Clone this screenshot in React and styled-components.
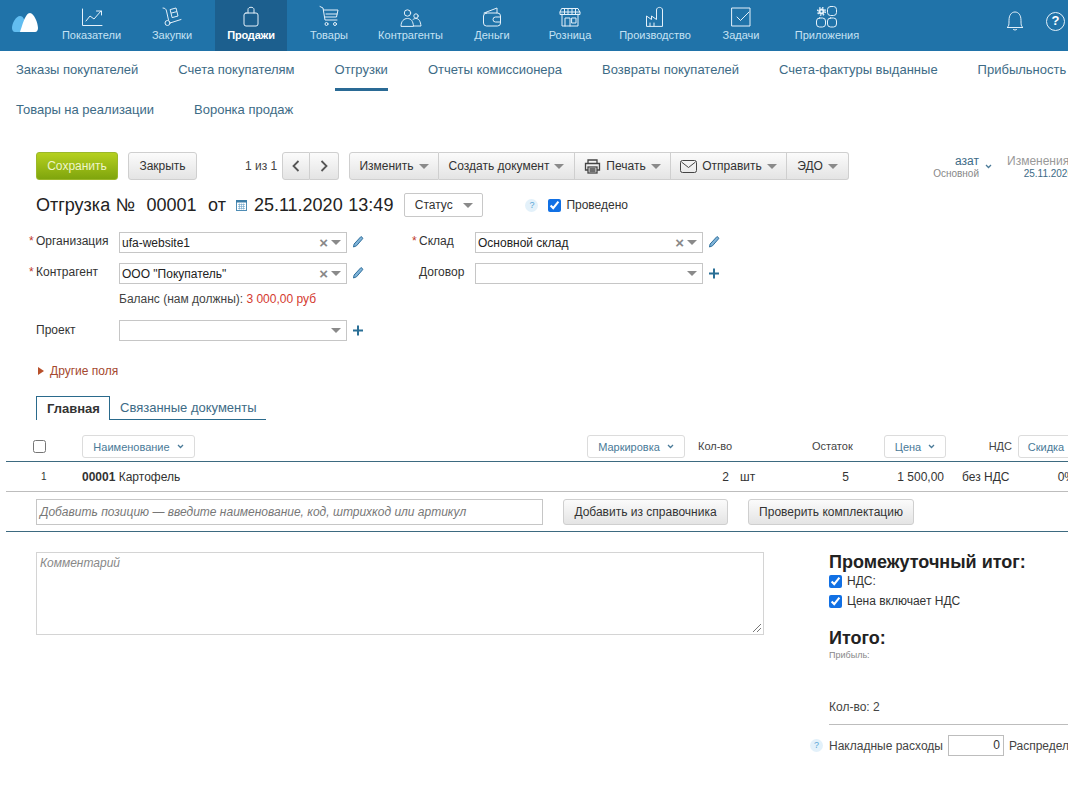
import React from 'react';
import styled, { createGlobalStyle } from 'styled-components';

const Global = createGlobalStyle`
  html, body { margin: 0; padding: 0; background: #fff; overflow: hidden; }
  body { font-family: "Liberation Sans", Arial, sans-serif; font-size: 12px; color: #333; }
  * { box-sizing: border-box; }
`;

const Page = styled.div`width: 1068px; height: 790px; overflow: hidden;`;
const Inner = styled.div`width: 1130px;`;

/* ---------- top bar ---------- */
const TopBar = styled.header`
  height: 51px; background: #2073a9; display: flex; width: 1068px;
`;
const LogoBox = styled.div`width: 47px; flex: none; padding: 11px 0 0 11px;`;
const NavItem = styled.a`
  flex: none; width: ${p => p.$w}px; margin-left: ${p => p.$ml || 0}px; height: 51px;
  display: flex; flex-direction: column; align-items: center; padding-top: 3px;
  font-size: 11px; line-height: 13px; color: ${p => (p.$active ? '#fff' : '#c5e2f4')};
  font-weight: ${p => (p.$active ? 700 : 400)};
  letter-spacing: ${p => (p.$active ? '-0.2px' : '0')};
  background: ${p => (p.$active ? '#1c5f8e' : 'transparent')};
  svg { display: block; }
`;
const TopRight = styled.div`margin-left: auto; display: flex; align-items: center; gap: 22px; padding: 0 3px 9px 0;`;
const Help = styled.span`
  width: 19px; height: 19px; border-radius: 50%; border: 1.5px solid #e3f1fa; color: #fff;
  font-size: 13px; font-weight: 700; line-height: 16px; text-align: center;
`;

const S = { fill: 'none', stroke: '#e4f1fa', strokeWidth: 1, strokeLinecap: 'round', strokeLinejoin: 'round' };
const I = ({ children }) => <svg width="30" height="26" viewBox="0 0 30 26" {...S}>{children}</svg>;

const icons = {
  chart: <I><path d="M5.5 6V22.5H25M9 18l4-5 4 3 7-8M19.5 8h5v4" /></I>,
  truck: <I><path d="M6 5c2 0 3 1 3.500 3l2 9" /><circle cx="10.500" cy="20" r="2.500" /><path d="M13 20l11-3.500" /><path d="M13.500 6.500l5.500-1.500 2 8-5.500 1.500zM14.500 10l5-1.300" /></I>,
  bag: <I><rect x="8" y="10" width="14" height="13" rx="2" /><path d="M12 10V6.500c0-3 6-3 6 0V10" /></I>,
  cart: <I><path d="M6 3.500l3 1.500 2 12h12M9.500 7H24l-1.500 7H11M12 11h11" /><circle cx="12.500" cy="21" r="1.500" /><circle cx="21" cy="21" r="1.500" /></I>,
  people: <I><circle cx="11.500" cy="10" r="3.200" /><circle cx="20" cy="13" r="2.200" /><path d="M5 23c0-5 3-7.500 6.500-7.500S17 18 17.500 23zM17 16.500c1-.7 2-1 3-1 3 0 4.500 3 5 7.500h-7" /></I>,
  wallet: <I><path d="M7 10l13-5v5" /><rect x="6.500" y="10" width="17" height="13" rx="3" /><path d="M23.500 14h-5a2.500 2.500 0 000 5h5" /></I>,
  shop: <I><path d="M7 5.500h16l2 4v2H5v-2zM5 9h20M9.500 5.500V11M13 5.500V11M17 5.500V11M20.500 5.500V11M7 11v12h16V11M10 23v-8h5v8M17 15h4v5h-4z" /></I>,
  factory: <I><path d="M6.500 23V13l5 3.500V13l5 3.500V7c0-3.500 6-3.500 6 0v16zM10 23v-3M14 23v-3" /></I>,
  tasks: <I><rect x="6" y="5" width="18" height="18" /><path d="M11 14l3.500 3.500L23 9" /></I>,
  apps: <I>
    <circle cx="9.500" cy="8.500" r="3" fill="#e4f1fa" stroke="none" />
    <circle cx="9.500" cy="8.500" r="3.800" strokeWidth="1.500" strokeDasharray="1.500 1.500" strokeLinecap="butt" />
    <circle cx="9.500" cy="8.500" r="1" fill="#2073a9" stroke="none" />
    <rect x="15.500" y="3.500" width="9" height="9" rx="3" /><rect x="4.500" y="15" width="9" height="9" rx="3" /><rect x="15.500" y="15" width="9" height="9" rx="3" />
  </I>,
};

const nav = [
  ['Показатели', 'chart', 89, 0],
  ['Закупки', 'truck', 66, 3],
  ['Продажи', 'bag', 72, 10, true],
  ['Товары', 'cart', 64, 10],
  ['Контрагенты', 'people', 85, 7],
  ['Деньги', 'wallet', 56, 11],
  ['Розница', 'shop', 60, 20],
  ['Производство', 'factory', 90, 10],
  ['Задачи', 'tasks', 56, 13],
  ['Приложения', 'apps', 80, 18],
];

/* ---------- sub nav ---------- */
const SubNav = styled.nav`
  width: 1068px; display: flex; flex-wrap: wrap; column-gap: 40px; padding: 0 0 0 16px;
`;
const SubLink = styled.a`
  height: 40px; padding-top: 11px; font-size: 13px; line-height: 16px; color: #3d6b86; white-space: nowrap;
  border-bottom: 3px solid ${p => (p.$active ? '#2a6a95' : 'transparent')};
`;

/* ---------- toolbar ---------- */
const Content = styled.main`padding: 21px 0 0 36px;`;
const Toolbar = styled.div`display: flex; align-items: center; height: 28px;`;
const Btn = styled.button`
  height: ${p => p.$h || 28}px; font: 12px "Liberation Sans", Arial, sans-serif; color: #333; padding: 0;
  background: linear-gradient(#fbfbfb, #e4e4e4); border: 1px solid #cfcfcf; border-radius: 3px;
  display: inline-flex; align-items: center; justify-content: center; gap: 5px; white-space: nowrap;
  width: ${p => (p.$w ? `${p.$w}px` : 'auto')}; margin-left: ${p => p.$ml || 0}px; flex: none;
  svg { flex: none; }
`;
const SaveBtn = styled(Btn)`
  background: linear-gradient(#b5d01f, #7fa50d); border-color: #9bb82a; color: #eef5c8; width: 82px;
`;
const Pager = styled.span`margin-left: 48px; width: 37px; font-size: 12px; color: #444;`;
const Group = styled.div`display: flex; margin-left: ${p => p.$ml || 0}px;`;
const GroupBtn = styled(Btn)`
  border-radius: 0; border-left-width: 0;
  &:first-child { border-left-width: 1px; border-radius: 3px 0 0 3px; }
  &:last-child { border-radius: 0 3px 3px 0; }
`;
const Caret = styled.i`
  display: inline-block; width: 0; height: 0; margin-left: ${p => p.$ml ?? 0}px;
  border-left: 5px solid transparent; border-right: 5px solid transparent; border-top: 5px solid #8a8a8a;
`;
const Owner = styled.div`margin-left: 84px; width: 46px; text-align: right; color: #3d6b86; font-size: 12px; line-height: 13px; margin-top: 2px;`;
const Small = styled.div`font-size: 10px; color: #888; line-height: 12px; white-space: nowrap;`;
const OwnerChev = styled.span`margin: 0 15px 0 6px; display: inline-flex;`;
const Changes = styled.div`width: 66px; flex: none; color: #999; font-size: 12px; line-height: 13px; margin-top: 2px; white-space: nowrap;`;
const ChangeDate = styled.div`font-size: 10px; color: #3d6b86; line-height: 12px; text-align: right;`;

/* ---------- title ---------- */
const TitleRow = styled.div`display: flex; align-items: center; height: 24px; margin-top: 13px; font-size: 18px; color: #222; white-space: pre; word-spacing: 0.7px;`;
const CalIcon = styled.span`margin: 0 7px 0 10px; display: inline-flex;`;
const StatusBtn = styled.button`
  width: 79px; height: 24px; margin-left: 11px; background: #fff; border: 1px solid #c8c8c8; border-radius: 2px;
  font: 12px "Liberation Sans", Arial, sans-serif; color: #333; display: flex; align-items: center; justify-content: center; gap: 4px;
`;
const Hint = styled.span`
  width: 13px; height: 13px; border-radius: 50%; background: #e3f1fa; color: #5aa6d6; font-size: 9px;
  line-height: 13px; text-align: center; flex: none; margin-left: ${p => p.$ml || 0}px; margin-right: ${p => p.$mr || 0}px;
`;
const Check = styled.label`
  display: flex; align-items: center; gap: 5px; font-size: 12px; color: #333; line-height: 14px;
  margin-left: ${p => p.$ml || 0}px;
  input { margin: 0; width: 13px; height: 13px; accent-color: #1170e4; }
`;

/* ---------- form ---------- */
const Form = styled.div`
  display: grid; grid-template-columns: 90px 228px 65px 63px 228px 30px; grid-template-rows: 21px 21px 16px 21px; row-gap: 10px;
  margin: 15px 0 0 -7px;
`;
const Label = styled.div`font-size: 12px; color: #333; line-height: 18px; padding-left: ${p => (p.$req ? 0 : 7)}px;`;
const ProjectLabel = styled(Label)`line-height: 20px;`;
const Star = styled.span`display: inline-block; width: 7px; color: #c0392b;`;
const Select = styled.div`
  height: 21px; border: 1px solid #c6c6c6; display: flex; align-items: center; padding: 0 5px 0 2px;
  font-size: 12px; color: #222; background: #fff; white-space: nowrap;
`;
const SelSpacer = styled.span`flex: 1;`;
const Clear = styled.span`color: #888; font-size: 15px; font-weight: 700; margin-right: 0; line-height: 12px;`;
const SelCaret = styled(Caret)`margin-left: 3px;`;
const IconCell = styled.div`padding: 3px 0 0 5px;`;
const Balance = styled.div`font-size: 12px; color: #444; grid-column: 2 / 5; line-height: 14px; margin-top: -2px; white-space: nowrap; b { font-weight: 400; color: #d43a2f; }`;
const More = styled.div`display: flex; align-items: center; gap: 6px; margin: 23px 0 0 2px; color: #a5482f; font-size: 12px; line-height: 14px;`;
const Tri = styled.i`width: 0; height: 0; border-top: 4.500px solid transparent; border-bottom: 4.500px solid transparent; border-left: 6px solid #b8502a;`;

/* ---------- tabs ---------- */
const Tabs = styled.div`display: flex; margin-top: 18px; height: 24px;`;
const Tab = styled.div`
  font-size: 13px; padding: 0 0 0 10px; line-height: 24px; width: ${p => (p.$active ? '74px' : '156px')}; white-space: nowrap;
  ${p => (p.$active
    ? 'font-weight:700;color:#333;border:1px solid #2a6a8c;border-bottom:0;'
    : 'color:#3d6b86;border-bottom:1px solid #2a6a8c;line-height:23px;')}
`;

/* ---------- table ---------- */
const Table = styled.div`margin: 15px 0 0 -30px;`;
const cols = '76px 505px 105px 43px 70px 50px 95px 64px 61px';
const HeadRow = styled.div`
  display: grid; grid-template-columns: ${cols}; height: 27px; align-items: start; border-bottom: 1px solid #3d6a80;
  font-size: 11px; color: #444;
`;
const BodyRow = styled.div`
  display: grid; grid-template-columns: ${cols}; height: 30px; align-items: center; border-bottom: 1px solid #bdbdbd;
  font-size: 12px; color: #333;
`;
const HeadBtn = styled.button`
  height: 23px; width: ${p => p.$w}px; margin-left: ${p => p.$ml || 0}px; background: #fff; border: 1px solid #dcdcdc; border-radius: 3px;
  font: 11px "Liberation Sans", Arial, sans-serif; color: #4a7a98; display: flex; align-items: center; justify-content: center; gap: 7px; padding: 0;
  white-space: nowrap;
`;
const HeadText = styled.div`padding: 4px ${p => p.$pr || 0}px 0 ${p => p.$pl || 0}px; line-height: 14px; text-align: ${p => p.$align || 'left'};`;
const Cell = styled.div`padding: 0 ${p => p.$pr || 0}px 0 ${p => p.$pl || 0}px; text-align: ${p => p.$align || 'left'}; white-space: nowrap;`;
const IndexCell = styled(Cell)`font-size: 10px;`;
const HeadCheck = styled.input`margin: 5px 0 0 27px; width: 13px; height: 13px;`;
const AddRow = styled.div`
  height: 40px; display: flex; align-items: flex-start; padding: 7px 0 0 30px; border-bottom: 1px solid #3d6a80;
`;
const AddInput = styled.div`
  width: 507px; height: 26px; border: 1px solid #c6c6c6; font-style: italic; color: #777; font-size: 12px; line-height: 24px; padding-left: 3px;
`;

/* ---------- bottom ---------- */
const Bottom = styled.div`display: flex; margin-top: 20px;`;
const Comment = styled.div`
  width: 728px; height: 83px; border: 1px solid #d4d4d4; padding: 3px; font-style: italic; color: #888; font-size: 12px; line-height: 14px; position: relative; flex: none;
`;
const Grip = styled.svg`position: absolute; right: 1px; bottom: 1px;`;
const Side = styled.aside`margin-left: 65px; width: 300px;`;
const H2 = styled.h2`margin: ${p => p.$mt || 0}px 0 0; font-size: 18px; line-height: 21px; font-weight: 700; color: #222;`;
const Profit = styled.div`font-size: 9px; line-height: 11px; color: #888; margin-top: 1px;`;
const Qty = styled.div`font-size: 12px; line-height: 14px; color: #444; margin-top: 39px; padding-bottom: 10px; border-bottom: 1px solid #bdbdbd;`;
const Overhead = styled.div`display: flex; align-items: center; margin: 10px 0 0 -19px; font-size: 12px; color: #444; white-space: nowrap;`;
const OverInput = styled.div`width: 56px; height: 21px; border: 1px solid #bdbdbd; text-align: right; padding-right: 3px; line-height: 19px; margin: 0 5px; color: #333;`;
const Stack = styled.div`display: flex; flex-direction: column; gap: 6px; margin-top: 1px;`;

const Pencil = () => (
  <svg width="12" height="14" viewBox="0 0 12 14"><path d="M9 1.500l2 1.800-6.500 7.500-3 1.200.6-3z" fill="#7fb3d8" stroke="#2f6f9c" strokeWidth="1" strokeLinejoin="round" /></svg>
);
const Plus = () => (
  <svg width="12" height="14" viewBox="0 0 12 14"><path d="M6 2.500v10M1 7.500h10" stroke="#2a6f96" strokeWidth="2" /></svg>
);

const Chevron = ({ d }) => (
  <svg width="12" height="16" viewBox="0 0 12 16" fill="none" stroke="#555" strokeWidth="1.800"><path d={d} /></svg>
);
const Down = () => (
  <svg width="7" height="5" viewBox="0 0 7 5" fill="none" stroke="#4a7a98" strokeWidth="1.300"><path d="M1 1l2.500 2.500L6 1" /></svg>
);

const Field = ({ value, clear }) => (
  <Select>{value}<SelSpacer />{clear && <Clear>×</Clear>}<SelCaret /></Select>
);

export default function App() {
  return (
    <Page>
      <Global />
      <Inner>
        <TopBar>
          <LogoBox>
            <svg width="28" height="22" viewBox="0 0 28 22">
              <path d="M1 17c0-5 4-12 8-12 3 0 4 3 5 6l-4 10H4c-2 0-3-2-3-4z" fill="#62bdf0" />
              <path d="M9 21c2-5 5-19 10-19 4 0 8 10 8 15 0 2-1 4-3 4z" fill="#fff" />
            </svg>
          </LogoBox>
          {nav.map(([t, ic, w, ml, a]) => (
            <NavItem key={t} $w={w} $ml={ml} $active={a}>{icons[ic]}{t}</NavItem>
          ))}
          <TopRight>
            <svg width="18" height="20" viewBox="0 0 18 20" fill="none" stroke="#e4f1fa" strokeWidth="1"><path d="M1 16.500c2-1 2-3 2-7C3 4 5.500 1 9 1s6 3 6 8.500c0 4 0 6 2 7zM7 18c.5 1.300 3.500 1.300 4 0" /></svg>
            <Help>?</Help>
          </TopRight>
        </TopBar>

        <SubNav>
          {['Заказы покупателей', 'Счета покупателям', 'Отгрузки', 'Отчеты комиссионера', 'Возвраты покупателей', 'Счета-фактуры выданные', 'Прибыльность', 'Товары на реализации', 'Воронка продаж'].map(t => (
            <SubLink key={t} $active={t === 'Отгрузки'}>{t}</SubLink>
          ))}
        </SubNav>

        <Content>
          <Toolbar>
            <SaveBtn>Сохранить</SaveBtn>
            <Btn $w={69} $ml={10}>Закрыть</Btn>
            <Pager>1 из 1</Pager>
            <Group>
              <GroupBtn $w={28}><Chevron d="M8.500 3L3.500 8l5 5" /></GroupBtn>
              <GroupBtn $w={29}><Chevron d="M3.500 3l5 5-5 5" /></GroupBtn>
            </Group>
            <Group $ml={10}>
              <GroupBtn $w={90}>Изменить <Caret /></GroupBtn>
              <GroupBtn $w={136}>Создать документ <Caret /></GroupBtn>
              <GroupBtn $w={96}>
                <svg width="17" height="15" viewBox="0 0 17 15" fill="none" stroke="#444" strokeWidth="1.300"><path d="M4 4V1h9v3M4 11H1.500V4.500h14V11H13" /><rect x="4" y="8" width="9" height="6" /><path d="M5.500 10h6M5.500 12h6" /></svg>
                Печать <Caret />
              </GroupBtn>
              <GroupBtn $w={116}>
                <svg width="17" height="13" viewBox="0 0 17 13" fill="none" stroke="#444" strokeWidth="1"><rect x=".5" y=".5" width="16" height="12" rx="2" /><path d="M1.500 2l7 5.500 7-5.500" /></svg>
                Отправить <Caret />
              </GroupBtn>
              <GroupBtn $w={62}>ЭДО <Caret /></GroupBtn>
            </Group>
            <Owner>азат<Small>Основной</Small></Owner>
            <OwnerChev><Down /></OwnerChev>
            <Changes>Изменения<ChangeDate>25.11.2020</ChangeDate></Changes>
          </Toolbar>

          <TitleRow>
            Отгрузка №  00001  от
            <CalIcon>
              <svg width="11" height="12" viewBox="0 0 11 12"><rect x=".5" y="1.500" width="10" height="10" fill="#fff" stroke="#4f8db5" /><rect x="0" y="1" width="11" height="2.500" fill="#3d7ea8" /><path d="M2 5.500h7M2 7.500h7M2 9.500h7M3.500 4.500v6M5.500 4.500v6M7.500 4.500v6" stroke="#6ba3c8" strokeWidth=".6" /></svg>
            </CalIcon>
            25.11.2020 13:49
            <StatusBtn>Статус <Caret $ml={3} /></StatusBtn>
            <Hint $ml={42}>?</Hint>
            <Check $ml={10}><input type="checkbox" defaultChecked />Проведено</Check>
          </TitleRow>

          <Form>
            <Label $req><Star>*</Star>Организация</Label>
            <Field value="ufa-website1" clear />
            <IconCell><Pencil /></IconCell>
            <Label $req><Star>*</Star>Склад</Label>
            <Field value="Основной склад" clear />
            <IconCell><Pencil /></IconCell>

            <Label $req><Star>*</Star>Контрагент</Label>
            <Field value={'ООО "Покупатель"'} clear />
            <IconCell><Pencil /></IconCell>
            <Label>Договор</Label>
            <Field />
            <IconCell><Plus /></IconCell>

            <span />
            <Balance>Баланс (нам должны): <b>3 000,00 руб</b></Balance>
            <span /><span />

            <ProjectLabel>Проект</ProjectLabel>
            <Field />
            <IconCell><Plus /></IconCell>
          </Form>

          <More><Tri />Другие поля</More>

          <Tabs>
            <Tab $active>Главная</Tab>
            <Tab>Связанные документы</Tab>
          </Tabs>

          <Table>
            <HeadRow>
              <HeadCheck type="checkbox" />
              <HeadBtn $w={113}>Наименование <Down /></HeadBtn>
              <HeadBtn $w={98}>Маркировка <Down /></HeadBtn>
              <HeadText $pl={6}>Кол-во</HeadText>
              <span />
              <HeadText $pl={7}>Остаток</HeadText>
              <HeadBtn $w={62} $ml={29}>Цена <Down /></HeadBtn>
              <HeadText $align="right" $pr={2}>НДС</HeadText>
              <HeadBtn $w={70} $ml={4}>Скидка <Down /></HeadBtn>
            </HeadRow>
            <BodyRow>
              <IndexCell $pl={35}>1</IndexCell>
              <Cell><b>00001</b> Картофель</Cell>
              <span />
              <Cell $align="right" $pr={6}>2</Cell>
              <Cell $pl={5}>шт</Cell>
              <Cell $align="right" $pr={6}>5</Cell>
              <Cell $align="right" $pr={6}>1 500,00</Cell>
              <Cell $pl={12}>без НДС</Cell>
              <Cell $align="right">0%</Cell>
            </BodyRow>
            <AddRow>
              <AddInput>Добавить позицию — введите наименование, код, штрихкод или артикул</AddInput>
              <Btn $h={26} $w={165} $ml={20}>Добавить из справочника</Btn>
              <Btn $h={26} $w={166} $ml={20}>Проверить комплектацию</Btn>
            </AddRow>
          </Table>

          <Bottom>
            <Comment>
              Комментарий
              <Grip width="10" height="10" viewBox="0 0 10 10" fill="none" stroke="#777"><path d="M1 9l8-8M5 9l4-4" /></Grip>
            </Comment>
            <Side>
              <H2>Промежуточный итог:</H2>
              <Stack>
                <Check><input type="checkbox" defaultChecked />НДС:</Check>
                <Check><input type="checkbox" defaultChecked />Цена включает НДС</Check>
              </Stack>
              <H2 $mt={20}>Итого:</H2>
              <Profit>Прибыль:</Profit>
              <Qty>Кол-во: 2</Qty>
              <Overhead>
                <Hint $mr={6}>?</Hint>
                Накладные расходы
                <OverInput>0</OverInput>
                Распределить
              </Overhead>
            </Side>
          </Bottom>
        </Content>
      </Inner>
    </Page>
  );
}
